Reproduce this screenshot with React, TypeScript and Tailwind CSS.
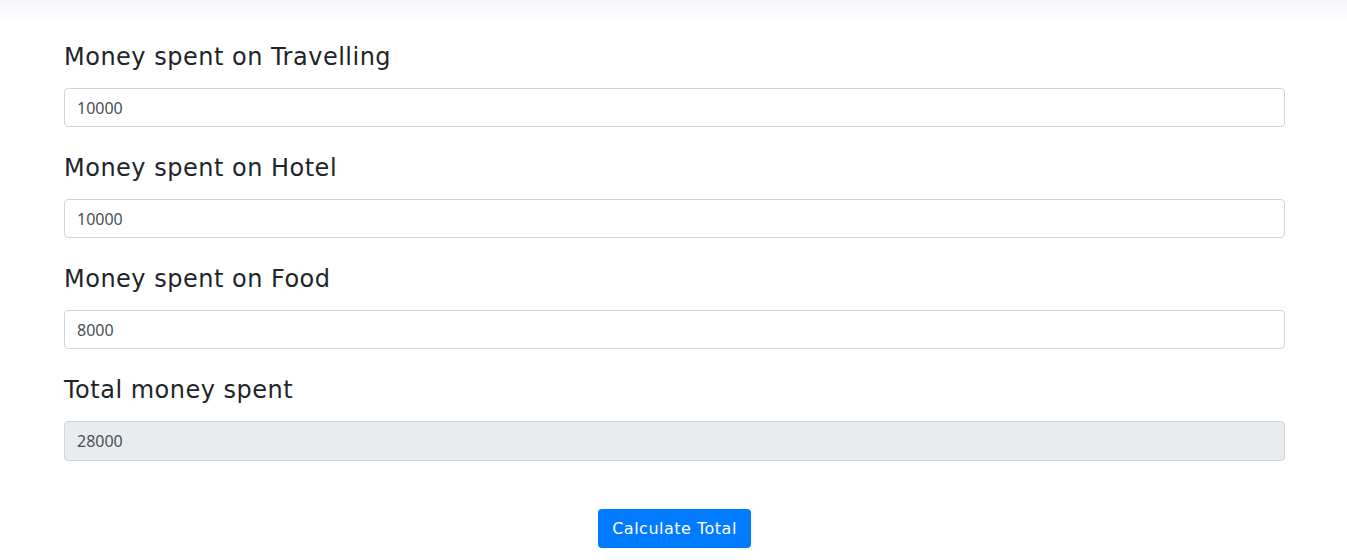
import React, { useState } from 'react'

export default function App() {
  const [travel, setTravel] = useState('10000')
  const [hotel, setHotel] = useState('10000')
  const [food, setFood] = useState('8000')
  const [total, setTotal] = useState('28000')

  const calculate = () => {
    setTotal(String((Number(travel) || 0) + (Number(hotel) || 0) + (Number(food) || 0)))
  }

  const fields = [
    { label: 'Money spent on Travelling', value: travel, set: setTravel },
    { label: 'Money spent on Hotel', value: hotel, set: setHotel },
    { label: 'Money spent on Food', value: food, set: setFood },
  ]

  const heading = "mb-[16px] font-['DejaVu_Sans',sans-serif] text-[24px] leading-[29px] tracking-[0.5px] font-normal text-[#212529]"

  return (
    <div className="min-h-[560px] bg-white font-['Noto_Sans',sans-serif]">
      <div className="h-[25px] bg-gradient-to-b from-[#f6f7fa] to-white" />

      <div className="pl-[64px] pr-[62px] pt-[18px]">
        {fields.map((f) => (
          <div key={f.label} className="mb-[27px]">
            <h4 className={heading}>{f.label}</h4>
            <input
              type="text"
              value={f.value}
              onChange={(e) => f.set(e.target.value)}
              className="block h-[39px] w-full rounded-[4px] border border-[#ced4da] bg-white px-[12px] text-[16px] text-[#495057] outline-none"
            />
          </div>
        ))}

        <div>
          <h4 className={heading}>Total money spent</h4>
          <input
            type="text"
            value={total}
            disabled
            className="block h-[40px] w-full rounded-[4px] border border-[#ced4da] bg-[#e9ecef] px-[12px] text-[16px] text-[#495057]"
          />
        </div>

        <div className="mt-[48px] flex justify-center">
          <button
            onClick={calculate}
            className="h-[39px] rounded-[4px] bg-[#007bff] px-[14px] font-['DejaVu_Sans',sans-serif] text-[16px] tracking-[0.5px] text-white"
          >
            Calculate Total
          </button>
        </div>
      </div>
    </div>
  )
}
